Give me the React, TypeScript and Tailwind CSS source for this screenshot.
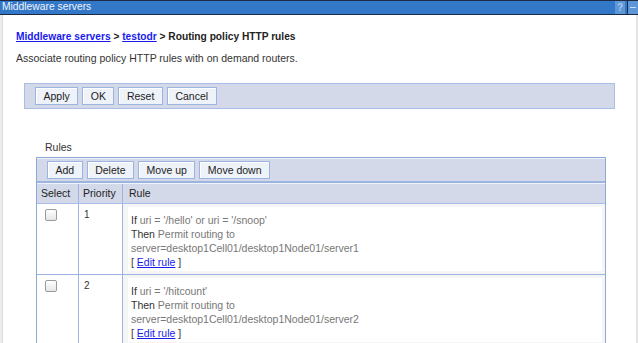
import React from "react";

const Btn = ({ children }: { children: React.ReactNode }) => (
  <button className="h-[18px] px-[7.5px] border border-[#9db4e0] bg-[#eef2f9] text-[10.5px] leading-none text-[#222] shadow-[inset_1px_1px_0_#ffffff]">
    {children}
  </button>
);

const Check = () => (
  <div className="w-[12px] h-[12px] rounded-[2px] border border-[#9a9a9a] bg-gradient-to-b from-[#ffffff] to-[#e6e6e6]" />
);

const RuleRow = ({
  n,
  cond,
  server,
  last,
}: {
  n: string;
  cond: string;
  server: string;
  last?: boolean;
}) => (
  <div className={`flex ${last ? "" : "border-b border-[#9db4e0]"}`}>
    <div className="w-[42px] shrink-0 border-r border-[#9db4e0] bg-white pl-[8px] pt-[5px]">
      <Check />
    </div>
    <div className="w-[44px] shrink-0 border-r border-[#9db4e0] bg-white pl-[5px] pt-[3px] text-[10px] text-[#333]">
      {n}
    </div>
    <div className="flex-1 bg-[#f5f5f5] p-[3px] pl-[5px]">
      <div className="bg-white px-[3px] pt-[6px] pb-[2px] text-[10.5px] leading-[14px] text-[#777]">
        <div>
          <span className="text-[#333]">If</span> {cond}
        </div>
        <div>
          <span className="text-[#333]">Then</span> Permit routing to
        </div>
        <div>{server}</div>
        <div className="text-[#333]">
          [ <span className="text-[#1a1aee] underline">Edit rule</span> ]
        </div>
      </div>
    </div>
  </div>
);

export default function App() {
  return (
    <div
      className="w-[638px] h-[343px] overflow-hidden bg-white flex flex-col"
      style={{ fontFamily: '"Liberation Sans", Arial, sans-serif' }}
    >
      <div className="h-[15px] shrink-0 bg-[#3378c8] border-t border-b border-[#1c2b44] flex items-center justify-between">
        <span className="pl-[2px] text-[10.3px] leading-none text-[#f0f4fa]">Middleware servers</span>
        <div className="flex h-full items-stretch">
          <div className="w-[10px] mr-[2px] bg-[#5e97d8] text-[#a8c8ee] text-[10px] font-bold leading-[13px] text-center">?</div>
          <div className="w-[1px] bg-[#1c2b44]" />
          <div className="w-[10px] bg-[#5e97d8] flex items-center justify-center">
            <div className="w-[6px] h-[1px] bg-[#cfe0f5]" />
          </div>
        </div>
      </div>
      <div className="flex flex-1">
        <div className="w-[3px] bg-[#ececec] border-r border-[#dcdcdc]" />
        <div className="flex-1 flex flex-col">
          <div className="pl-[13px] pt-[15px] text-[10.2px] font-bold text-[#222] leading-[14px]">
            <span className="text-[#1a1aee] underline">Middleware servers</span> &gt;{" "}
            <span className="text-[#1a1aee] underline">testodr</span> &gt; Routing policy HTTP rules
          </div>
          <div className="pl-[13px] pt-[7px] text-[10.5px] text-[#333] leading-[14px]">
            Associate routing policy HTTP rules with on demand routers.
          </div>
          <div className="ml-[21px] mr-[21px] mt-[18px] h-[26px] bg-[#d3d9e8] border border-[#a9bde8] flex items-center gap-[4px] pl-[10px]">
            <Btn>Apply</Btn>
            <Btn>OK</Btn>
            <Btn>Reset</Btn>
            <Btn>Cancel</Btn>
          </div>
          <div className="pl-[42px] pt-[31px] text-[10.5px] text-[#333] leading-[14px]">Rules</div>
          <div className="ml-[33px] mr-[30px] mt-[3px] border border-[#8fa8dc]">
            <div className="h-[25px] bg-[#d3d9e8] border-t border-[#eef2f9] flex items-center gap-[4px] pl-[10px] border-b-2 border-b-[#9db4e0]">
              <Btn>Add</Btn>
              <Btn>Delete</Btn>
              <Btn>Move up</Btn>
              <Btn>Move down</Btn>
            </div>
            <div className="flex h-[21px] bg-[#d3d9e8] border-t border-[#eef2f9] border-b border-b-[#a9bde8] text-[10.5px] text-[#222]">
              <div className="w-[42px] border-r border-[#9db4e0] pl-[4px] flex items-center">Select</div>
              <div className="w-[44px] border-r border-[#9db4e0] pl-[4px] flex items-center">Priority</div>
              <div className="flex-1 pl-[6px] flex items-center">Rule</div>
            </div>
            <RuleRow
              n="1"
              cond="uri = '/hello' or uri = '/snoop'"
              server="server=desktop1Cell01/desktop1Node01/server1"
            />
            <RuleRow
              n="2"
              cond="uri = '/hitcount'"
              server="server=desktop1Cell01/desktop1Node01/server2"
              last
            />
          </div>
        </div>
        <div className="w-[2px] bg-[#e4e4e4]" />
      </div>
    </div>
  );
}
